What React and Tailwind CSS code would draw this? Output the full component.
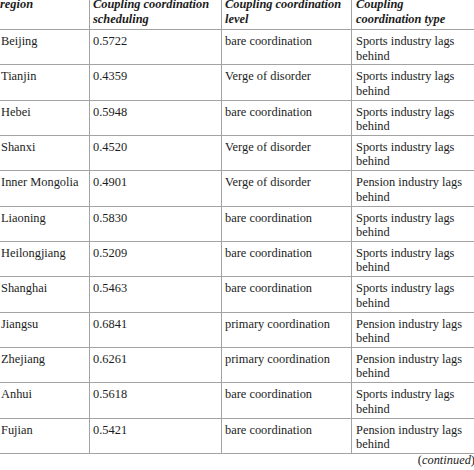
import React from "react";

const rows = [
  ["Beijing", "0.5722", "bare coordination", "Sports industry lags"],
  ["Tianjin", "0.4359", "Verge of disorder", "Sports industry lags"],
  ["Hebei", "0.5948", "bare coordination", "Sports industry lags"],
  ["Shanxi", "0.4520", "Verge of disorder", "Sports industry lags"],
  ["Inner Mongolia", "0.4901", "Verge of disorder", "Pension industry lags"],
  ["Liaoning", "0.5830", "bare coordination", "Sports industry lags"],
  ["Heilongjiang", "0.5209", "bare coordination", "Sports industry lags"],
  ["Shanghai", "0.5463", "bare coordination", "Sports industry lags"],
  ["Jiangsu", "0.6841", "primary coordination", "Pension industry lags"],
  ["Zhejiang", "0.6261", "primary coordination", "Pension industry lags"],
  ["Anhui", "0.5618", "bare coordination", "Sports industry lags"],
  ["Fujian", "0.5421", "bare coordination", "Pension industry lags"],
];

export default function App() {
  return (
    <div
      className="w-[474px] h-[470px] overflow-hidden bg-white text-[#1c1c1c] text-[12.4px] leading-[14.5px]"
      style={{ fontFamily: '"Liberation Serif", "Times New Roman", serif' }}
    >
      <div className="-mt-[3px]">
        <div className="grid grid-cols-[89px_132px_130px_1fr] h-[33px] border-b border-[#a3a3a3] italic font-bold whitespace-nowrap">
          <div className="pl-[0px]">region</div>
          <div className="border-l border-[#a3a3a3] pl-[3px]">
            Coupling coordination
            <br />
            scheduling
          </div>
          <div className="border-l border-[#a3a3a3] pl-[3px]">
            Coupling coordination
            <br />
            level
          </div>
          <div className="border-l border-[#a3a3a3] pl-[4px]">
            Coupling
            <br />
            coordination type
          </div>
        </div>
        {rows.map((r) => (
          <div
            key={r[0]}
            className="grid grid-cols-[89px_132px_130px_1fr] h-[35.33px] border-b border-[#a3a3a3] whitespace-nowrap"
          >
            <div className="pl-[1px] pt-[4px]">{r[0]}</div>
            <div className="border-l border-[#a3a3a3] pl-[3px] pt-[4px]">{r[1]}</div>
            <div className="border-l border-[#a3a3a3] pl-[3px] pt-[4px]">{r[2]}</div>
            <div className="border-l border-[#a3a3a3] pl-[4px] pt-[4px]">
              {r[3]}
              <br />
              behind
            </div>
          </div>
        ))}
        <div className="text-right -mt-[1px] -mr-[1px]">
          (<span className="italic">continued</span>)
        </div>
      </div>
    </div>
  );
}
